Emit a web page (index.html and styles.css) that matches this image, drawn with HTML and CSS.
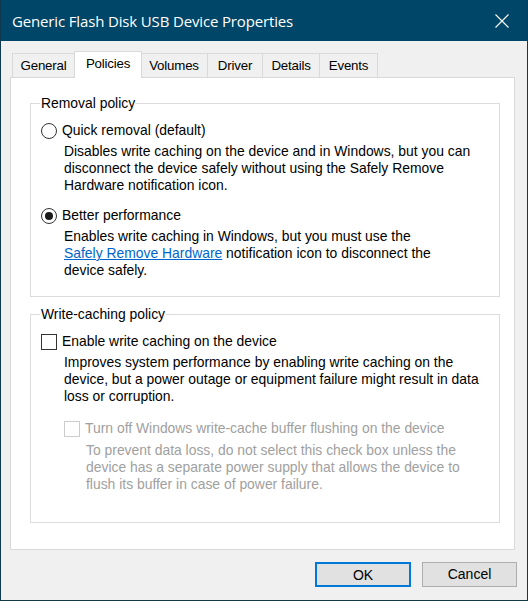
FILE: index.html
```html
<!DOCTYPE html>
<html>
<head>
<meta charset="utf-8">
<link rel="stylesheet" href="styles.css">
</head>
<body>
<div class="window">
  <div class="titlebar">
    <span class="title">Generic Flash Disk USB Device Properties</span>
    <svg class="close" width="16" height="16" viewBox="0 0 16 16"><path d="M1.5 1.5 L14.5 14.5 M14.5 1.5 L1.5 14.5" stroke="#fff" stroke-width="1.1" fill="none"/></svg>
  </div>
  <div class="tabs">
    <div class="tab t-general">General</div>
    <div class="tab selected t-policies">Policies</div>
    <div class="tab t-volumes">Volumes</div>
    <div class="tab t-driver">Driver</div>
    <div class="tab t-details">Details</div>
    <div class="tab t-events">Events</div>
  </div>
  <div class="panel">
    <div class="group g1">
      <div class="legend">Removal policy</div>
      <div class="row first">
        <span class="radio"></span>
        <span class="label">Quick removal (default)</span>
      </div>
      <div class="desc">Disables write caching on the device and in Windows, but you can<br>disconnect the device safely without using the Safely Remove<br>Hardware notification icon.</div>
      <div class="row second">
        <span class="radio checked"></span>
        <span class="label">Better performance</span>
      </div>
      <div class="desc">Enables write caching in Windows, but you must use the<br><a class="link">Safely Remove Hardware</a> notification icon to disconnect the<br>device safely.</div>
    </div>
    <div class="group g2">
      <div class="legend">Write-caching policy</div>
      <div class="row first">
        <span class="check"></span>
        <span class="label">Enable write caching on the device</span>
      </div>
      <div class="desc">Improves system performance by enabling write caching on the<br>device, but a power outage or equipment failure might result in data<br>loss or corruption.</div>
      <div class="sub">
        <div class="row second">
          <span class="check disabled"></span>
          <span class="label dim">Turn off Windows write-cache buffer flushing on the device</span>
        </div>
        <div class="desc dim subdesc">To prevent data loss, do not select this check box unless the<br>device has a separate power supply that allows the device to<br>flush its buffer in case of power failure.</div>
      </div>
    </div>
  </div>
  <div class="buttons">
    <div class="btn ok">OK</div>
    <div class="btn cancel">Cancel</div>
  </div>
</div>
</body>
</html>
```

FILE: styles.css
```css
html, body {
  margin: 0;
  padding: 0;
  background: #f0f0f0;
}
.window {
  width: 528px;
  height: 601px;
  box-sizing: border-box;
  border: 1px solid #11394d;
  border-top: none;
  background: #f0f0f0;
  font-family: "Liberation Sans", Arial, sans-serif;
  font-size: 13.9px;
  color: #000;
}
.titlebar {
  height: 41px;
  background: #004668;
  display: flex;
  align-items: center;
  justify-content: space-between;
  padding: 0 17px 0 11px;
  color: #fff;
}
.title {
  font-family: "Open Sans", "Noto Sans", sans-serif;
  font-size: 15px;
  letter-spacing: -0.15px;
}
.close {
  display: block;
}
.tabs {
  display: flex;
  align-items: flex-end;
  height: 26px;
  margin: 10px 0 0 11px;
}
.tab {
  box-sizing: border-box;
  height: 24px;
  line-height: 23px;
  text-align: center;
  border: 1px solid #d9d9d9;
  border-bottom: none;
  background: #f0f0f0;
  font-size: 13.3px;
  letter-spacing: -0.2px;
  margin-left: -1px;
}
.tab.selected {
  height: 27px;
  line-height: 23px;
  background: #fff;
  margin-bottom: -1px;
  position: relative;
  z-index: 1;
}
.t-general { width: 63px; margin-left: 0; }
.t-policies { width: 68px; }
.t-volumes { width: 68px; margin-left: -2px; }
.t-driver { width: 56px; }
.t-details { width: 58px; }
.t-events { width: 59px; }
.panel {
  box-sizing: border-box;
  height: 473px;
  width: 505px;
  margin-left: 9px;
  background: #fff;
  border: 1px solid #d9d9d9;
  padding-top: 25px;
}
.group {
  box-sizing: border-box;
  width: 470px;
  margin-left: 19px;
  border: 1px solid #dcdcdc;
  line-height: 17px;
}
.g1 { padding-bottom: 17px; }
.g2 { margin-top: 17px; padding-bottom: 29px; }
.legend {
  display: table;
  margin: -9px 0 0 9px;
  padding: 0 1px;
  background: #fff;
  line-height: 17px;
}
.row {
  display: flex;
  align-items: center;
  height: 17px;
  margin-left: 10px;
}
.row.first { margin-top: 10px; }
.row.second { margin-top: 13px; }
.label { margin-left: 5px; }
.desc {
  margin: 4px 0 0 33px;
  white-space: nowrap;
}
.radio {
  box-sizing: border-box;
  width: 16px;
  height: 16px;
  border: 1px solid #333;
  border-radius: 50%;
  background: #fff;
  display: flex;
  align-items: center;
  justify-content: center;
}
.radio.checked::after {
  content: "";
  width: 8px;
  height: 8px;
  border-radius: 50%;
  background: #1a1a1a;
}
.check {
  box-sizing: border-box;
  width: 16px;
  height: 16px;
  border: 1px solid #333;
  background: #fff;
}
.check.disabled {
  border-color: #cccccc;
}
.sub {
  margin-left: 22px;
}
.sub .row.second { margin-left: 11px; margin-top: 15px; }
.subdesc { margin: 5px 0 0 33px; }
.dim { color: #a0a0a0; }
.link {
  color: #0066cc;
  text-decoration: underline;
}
.buttons {
  display: flex;
  justify-content: flex-end;
  gap: 11px;
  margin: 12px 10px 0 0;
}
.btn {
  box-sizing: border-box;
  height: 25px;
  line-height: 22px;
  text-align: center;
  background: #e1e1e1;
  border: 1px solid #adadad;
  font-size: 14px;
}
.ok {
  width: 96px;
  border: 2px solid #0078d7;
}
.cancel {
  width: 95px;
}
```
